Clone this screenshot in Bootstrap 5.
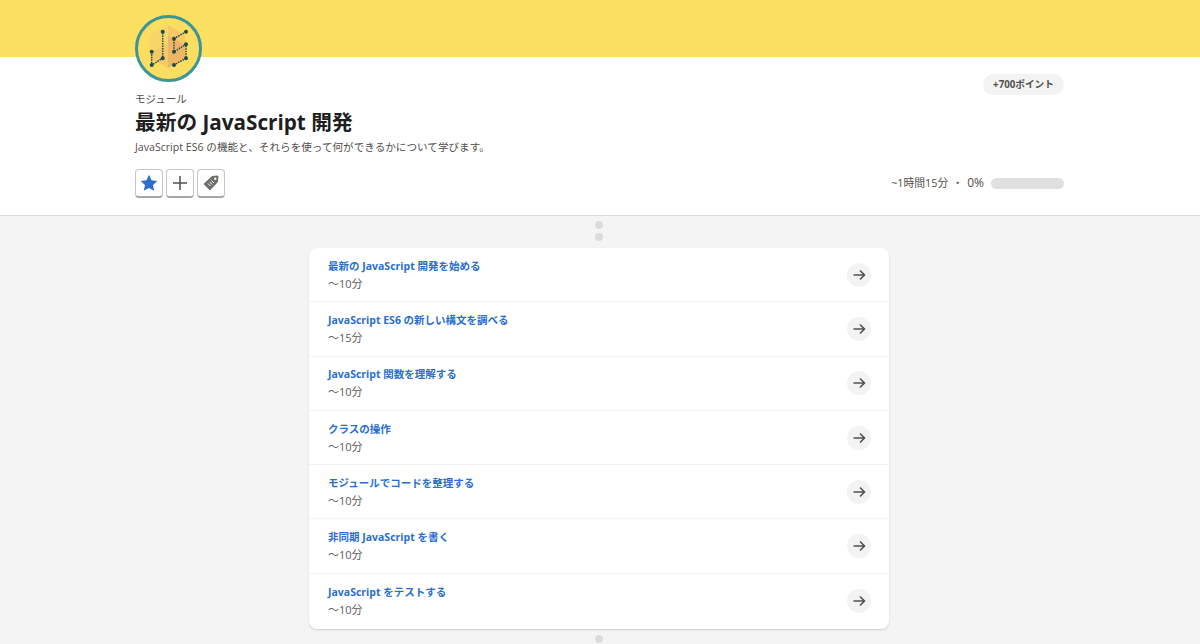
<!DOCTYPE html>
<html lang="ja">
<head>
  <meta charset="UTF-8" />
  <title>最新の JavaScript 開発</title>
  <link href="https://cdn.jsdelivr.net/npm/bootstrap@5.3.0/dist/css/bootstrap.min.css" rel="stylesheet"/>
  <style>
    html, body { height: 644px; overflow: hidden; }
    body { background: #f4f4f4; color: #514f4d; font-family: "Open Sans", "Noto Sans CJK JP", sans-serif; }
    .hero { background: #fff; border-bottom: 1px solid #dddbda; height: 216px; }
    .band { background: #fce062; height: 57px; }
    .hero-inner { width: 929px; margin-left: 135px; }
    .badge-icon { width: 67px; height: 67px; margin-top: -42px; display: block; }
    .eyebrow { font-size: 10.5px; line-height: 16px; margin-top: 9px; }
    .title { font-size: 20.700px; line-height: 30px; font-weight: 700; color: #1f1f1f; margin: 0 0 2px; }
    .desc { font-size: 10.600px; line-height: 16px; margin: 0; }
    .act { width: 28px; height: 29px; padding: 0; background: #fff; border: 1px solid #c9c7c5; border-bottom: 2px solid #a8a6a4; border-radius: 4px; }
    .actions { margin-top: 14px; gap: 3px; }
    .points { background: #f3f3f3; border-radius: 11px; height: 21px; font-size: 9.700px; line-height: 21px; font-weight: 700; padding: 0 10px; margin-top: 17px; }
    .meta { font-size: 10.800px; line-height: 16px; margin-top: 80px; }
    .sep { width: 19px; text-align: center; }
    .pct { font-size: 12px; margin-right: 7px; }
    .meter { width: 73px; height: 11px; background: #e0e0e0; border-radius: 6px; }
    .dot { width: 8px; height: 8px; border-radius: 50%; background: #dddbda; }
    .dots { width: 8px; margin-left: 595px; gap: 4px; padding-top: 5px; height: 32px; }
    .end-dot { margin-left: 595px; margin-top: 6px; }
    .units { width: 580px; margin-left: 309px; padding-bottom: 1px; background: #fff; border-radius: 8px; box-shadow: 0 1px 2px rgba(0,0,0,.16); }
    .unit { height: 54.3px; padding: 0 18px 0 19px; border-bottom: 1px solid #f3f3f3; }
    .unit:last-child { border-bottom: 0; }
    .unit a { display: block; color: #2a6fd0; font-size: 10.5px; line-height: 16px; font-weight: 700; text-decoration: none; }
    .unit small { display: block; font-size: 11px; line-height: 16px; margin-top: 2px; color: #5c5c5c; }
    .go { width: 24px; height: 24px; background: #f3f3f3; }
  </style>
</head>
<body>
  <header class="hero">
    <div class="band"></div>
    <div class="hero-inner d-flex justify-content-between">
      <div>
        <svg class="badge-icon" viewBox="0 0 67 67">
          <circle cx="33.500" cy="33.500" r="32" fill="#fbdd5f" stroke="#3c9597" stroke-width="3"/>
          <path d="M15 20l18-10v18l-18 10z" fill="#f8d56a"/>
          <path d="M15 38l18-10v25l-18-10z" fill="#f5c868"/>
          <path d="M33 10l17 10v10L33 20z" fill="#f5c868"/>
          <path d="M33 20l17 10v13L33 53z" fill="#f0b564"/>
          <g fill="none" stroke="#1d4a4c" stroke-width="1.500" stroke-dasharray="1.500 1">
            <path d="M16.700 36.700V50l11-6.700V16.700"/>
            <path d="M51 16.700l-12 7v13l12-7.400v14L39 50"/>
          </g>
          <g fill="#1d4a4c">
            <circle cx="27.700" cy="16.700" r="2"/><circle cx="51" cy="16.700" r="2"/><circle cx="39" cy="23.700" r="2"/>
            <circle cx="51" cy="29.300" r="2"/><circle cx="39" cy="36.700" r="2"/><circle cx="16.700" cy="36.700" r="2"/>
            <circle cx="27.700" cy="43.300" r="2"/><circle cx="51" cy="43.300" r="2"/><circle cx="16.700" cy="50" r="2"/>
            <circle cx="39" cy="50" r="2"/>
          </g>
        </svg>
        <div class="eyebrow">モジュール</div>
        <h1 class="title">最新の JavaScript 開発</h1>
        <p class="desc">JavaScript ES6 の機能と、それらを使って何ができるかについて学びます。</p>
        <div class="actions d-flex">
          <button class="act d-flex align-items-center justify-content-center" type="button" aria-label="お気に入り">
            <svg width="18" height="18" viewBox="0 0 18 18"><path d="M9 .8l2.500 5.400 5.800.7-4.300 4 1.200 5.900L9 13.900l-5.200 2.900L5 10.900.7 6.900l5.800-.7z" fill="#2a6fd0"/></svg>
          </button>
          <button class="act d-flex align-items-center justify-content-center" type="button" aria-label="追加">
            <svg width="14" height="14" viewBox="0 0 14 14"><path d="M7 0v14M0 7h14" stroke="#54524f" stroke-width="1.500"/></svg>
          </button>
          <button class="act d-flex align-items-center justify-content-center" type="button" aria-label="タグ">
            <svg width="18" height="18" viewBox="0 0 18 18"><path d="M10 2l5.600-.6.900 1-.6 5.600L8 16.500 1.500 10z" fill="#706e6b"/><circle cx="13.200" cy="4.800" r="1.200" fill="#fff"/><path d="M6 9.500l2.500 2.500M7.700 8l2.500 2.500M9.400 6.500l2.500 2.500" stroke="#fff" stroke-width="1"/></svg>
          </button>
        </div>
      </div>
      <div class="d-flex flex-column align-items-end">
        <div class="points">+700ポイント</div>
        <div class="meta d-flex align-items-center">
          <span>~1時間15分</span><span class="sep">・</span><span class="pct">0%</span>
          <div class="meter"></div>
        </div>
      </div>
    </div>
  </header>

  <div class="dots d-flex flex-column"><div class="dot"></div><div class="dot"></div></div>

  <main class="units" id="units"></main>
  <div class="dot end-dot"></div>

<script>
const units = [
  ['最新の JavaScript 開発を始める', '〜10分'],
  ['JavaScript ES6 の新しい構文を調べる', '〜15分'],
  ['JavaScript 関数を理解する', '〜10分'],
  ['クラスの操作', '〜10分'],
  ['モジュールでコードを整理する', '〜10分'],
  ['非同期 JavaScript を書く', '〜10分'],
  ['JavaScript をテストする', '〜10分']
];
document.getElementById('units').innerHTML = units.map(u => `
  <div class="unit d-flex align-items-center justify-content-between">
    <div><a href="#">${u[0]}</a><small>${u[1]}</small></div>
    <div class="go rounded-circle d-flex align-items-center justify-content-center">
      <svg width="14" height="14" viewBox="0 0 14 14" fill="none" stroke="#54524f" stroke-width="1.600"><path d="M1.500 7h11M8 2.500L12.500 7 8 11.500"/></svg>
    </div>
  </div>`).join('');
</script>
<script src="https://cdn.jsdelivr.net/npm/bootstrap@5.3.0/dist/js/bootstrap.bundle.min.js"></script>
</body>
</html>
